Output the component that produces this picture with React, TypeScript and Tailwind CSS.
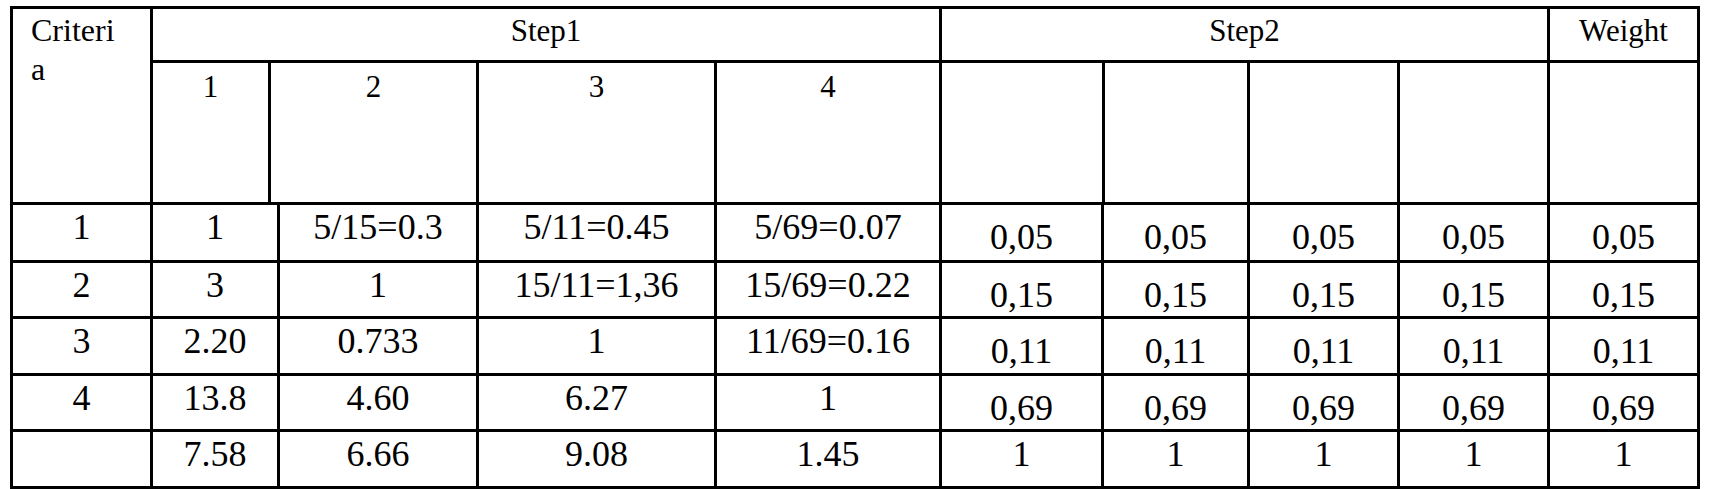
import React from "react";

const step1Rows = [
  ["1", "1", "5/15=0.3", "5/11=0.45", "5/69=0.07"],
  ["2", "3", "1", "15/11=1,36", "15/69=0.22"],
  ["3", "2.20", "0.733", "1", "11/69=0.16"],
  ["4", "13.8", "4.60", "6.27", "1"],
  ["", "7.58", "6.66", "9.08", "1.45"],
];

const step2Rows = [
  ["0,05", "0,05", "0,05", "0,05", "0,05"],
  ["0,15", "0,15", "0,15", "0,15", "0,15"],
  ["0,11", "0,11", "0,11", "0,11", "0,11"],
  ["0,69", "0,69", "0,69", "0,69", "0,69"],
  ["1", "1", "1", "1", "1"],
];

const rowHeights = ["h-[58px]", "h-[56px]", "h-[57px]", "h-[55px]", "h-[57px]"];

const serif = "[font-family:'Liberation_Serif','Times_New_Roman',serif]";
const cell = `border-[3px] border-black p-0 ${serif}`;

export default function App() {
  return (
    <div className={`bg-white min-h-screen pt-[6px] pl-[10px] text-black ${serif}`}>
      {/* header block */}
      <table className={`table-fixed border-collapse w-[1690px] ${serif}`}>
        <colgroup>
          <col className="w-[140px]" />
          <col className="w-[118px]" />
          <col className="w-[208px]" />
          <col className="w-[238px]" />
          <col className="w-[225px]" />
          <col className="w-[163px]" />
          <col className="w-[145px]" />
          <col className="w-[150px]" />
          <col className="w-[150px]" />
          <col className="w-[150px]" />
        </colgroup>
        <tbody>
          <tr className="h-[54px]">
            <td rowSpan={2} className={`${cell} align-top text-left pl-[18px] pt-[2px] text-[32px] leading-[39px]`}>
              Criteri
              <br />a
            </td>
            <td colSpan={4} className={`${cell} align-top text-center pt-[2px] text-[31px] leading-[39px]`}>
              Step1
            </td>
            <td colSpan={4} className={`${cell} align-top text-center pt-[2px] text-[31px] leading-[39px]`}>
              Step2
            </td>
            <td className={`${cell} align-top text-center pt-[2px] text-[31px] leading-[39px]`}>
              Weight
            </td>
          </tr>
          <tr className="h-[142px]">
            {["1", "2", "3", "4", "", "", "", "", ""].map((t, i) => (
              <td key={i} className={`${cell} align-top text-center pt-[4px] text-[31px] leading-[39px]`}>
                {t}
              </td>
            ))}
          </tr>
        </tbody>
      </table>

      {/* body block */}
      <table className={`table-fixed border-collapse w-[1690px] -mt-[3px] ${serif}`}>
        <colgroup>
          <col className="w-[140px]" />
          <col className="w-[127px]" />
          <col className="w-[199px]" />
          <col className="w-[238px]" />
          <col className="w-[225px]" />
          <col className="w-[162px]" />
          <col className="w-[146px]" />
          <col className="w-[150px]" />
          <col className="w-[150px]" />
          <col className="w-[150px]" />
        </colgroup>
        <tbody>
          {step1Rows.map((row, r) => (
            <tr key={r} className={rowHeights[r]}>
              {row.map((t, i) => (
                <td key={i} className={`${cell} align-top text-center pt-[1px] text-[36px] leading-[42px]`}>
                  {t}
                </td>
              ))}
              {step2Rows[r].map((t, i) => (
                <td
                  key={`s${i}`}
                  className={`${cell} align-top text-center text-[36px] leading-[42px] ${
                    r === 4 ? "pt-[1px]" : "pt-[11px]"
                  }`}
                >
                  {t}
                </td>
              ))}
            </tr>
          ))}
        </tbody>
      </table>
    </div>
  );
}
